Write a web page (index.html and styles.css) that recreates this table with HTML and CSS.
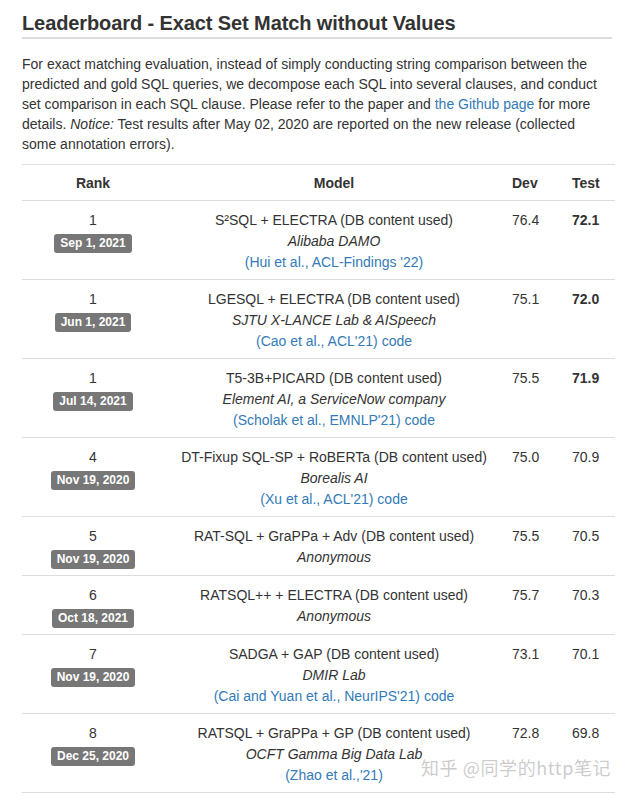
FILE: index.html
```html
<!DOCTYPE html>
<html>
<head>
<meta charset="utf-8">
<link rel="stylesheet" href="styles.css">
</head>
<body>
<div class="page">
  <h2 class="title">Leaderboard - Exact Set Match without Values</h2>
  <p class="intro">For exact matching evaluation, instead of simply conducting string comparison between the predicted and gold SQL queries, we decompose each SQL into several clauses, and conduct set comparison in each SQL clause. Please refer to the paper and <a class="link" href="#">the Github page</a> for more details. <em>Notice:</em> Test results after May 02, 2020 are reported on the new release (collected some annotation errors).</p>
  <table class="board">
    <colgroup>
      <col class="c-rank"><col class="c-model"><col class="c-dev"><col class="c-test">
    </colgroup>
    <thead>
      <tr><th class="rank">Rank</th><th class="model">Model</th><th class="dev">Dev</th><th class="test">Test</th></tr>
    </thead>
    <tbody>
      <tr>
        <td class="rank"><div>1</div><div class="badge-wrap"><span class="badge">Sep 1, 2021</span></div></td>
        <td class="model">S²SQL + ELECTRA (DB content used)<br><i>Alibaba DAMO</i><br><a class="link" href="#">(Hui et al., ACL-Findings '22)</a></td>
        <td class="dev">76.4</td><td class="test"><b>72.1</b></td>
      </tr>
      <tr>
        <td class="rank"><div>1</div><div class="badge-wrap"><span class="badge">Jun 1, 2021</span></div></td>
        <td class="model">LGESQL + ELECTRA (DB content used)<br><i>SJTU X-LANCE Lab &amp; AISpeech</i><br><a class="link" href="#">(Cao et al., ACL'21)</a> <a class="link" href="#">code</a></td>
        <td class="dev">75.1</td><td class="test"><b>72.0</b></td>
      </tr>
      <tr>
        <td class="rank"><div>1</div><div class="badge-wrap"><span class="badge">Jul 14, 2021</span></div></td>
        <td class="model">T5-3B+PICARD (DB content used)<br><i>Element AI, a ServiceNow company</i><br><a class="link" href="#">(Scholak et al., EMNLP'21)</a> <a class="link" href="#">code</a></td>
        <td class="dev">75.5</td><td class="test"><b>71.9</b></td>
      </tr>
      <tr>
        <td class="rank"><div>4</div><div class="badge-wrap"><span class="badge">Nov 19, 2020</span></div></td>
        <td class="model">DT-Fixup SQL-SP + RoBERTa (DB content used)<br><i>Borealis AI</i><br><a class="link" href="#">(Xu et al., ACL'21)</a> <a class="link" href="#">code</a></td>
        <td class="dev">75.0</td><td class="test">70.9</td>
      </tr>
      <tr>
        <td class="rank"><div>5</div><div class="badge-wrap"><span class="badge">Nov 19, 2020</span></div></td>
        <td class="model">RAT-SQL + GraPPa + Adv (DB content used)<br><i>Anonymous</i></td>
        <td class="dev">75.5</td><td class="test">70.5</td>
      </tr>
      <tr>
        <td class="rank"><div>6</div><div class="badge-wrap"><span class="badge">Oct 18, 2021</span></div></td>
        <td class="model">RATSQL++ + ELECTRA (DB content used)<br><i>Anonymous</i></td>
        <td class="dev">75.7</td><td class="test">70.3</td>
      </tr>
      <tr>
        <td class="rank"><div>7</div><div class="badge-wrap"><span class="badge">Nov 19, 2020</span></div></td>
        <td class="model">SADGA + GAP (DB content used)<br><i>DMIR Lab</i><br><a class="link" href="#">(Cai and Yuan et al., NeurIPS'21)</a> <a class="link" href="#">code</a></td>
        <td class="dev">73.1</td><td class="test">70.1</td>
      </tr>
      <tr>
        <td class="rank"><div>8</div><div class="badge-wrap"><span class="badge">Dec 25, 2020</span></div></td>
        <td class="model">RATSQL + GraPPa + GP (DB content used)<br><i>OCFT Gamma Big Data Lab</i><br><a class="link" href="#">(Zhao et al.,'21)</a></td>
        <td class="dev">72.8</td><td class="test">69.8</td>
      </tr>
    </tbody>
  </table>
</div>
<div class="watermark">知乎 @同学的http笔记</div>
</body>
</html>
```

FILE: styles.css
```css
html, body {
  margin: 0;
  padding: 0;
  background: #fff;
}
body {
  font-family: "Liberation Sans", Arial, sans-serif;
  color: #333;
  font-size: 14px;
  overflow: hidden;
}
.page {
  padding: 12px 21px 0 22px;
}
.title {
  margin: 0;
  font-size: 20px;
  line-height: 22px;
  font-weight: bold;
  letter-spacing: -0.1px;
  color: #333;
  padding-bottom: 3px;
  border-bottom: 2px solid #ddd;
}
.intro {
  margin: 15px 0 0;
  line-height: 20px;
  font-size: 14px;
}
.link {
  color: #337ab7;
  text-decoration: none;
}
.board {
  margin-top: 10px;
  width: 593px;
  table-layout: fixed;
  border-collapse: collapse;
}
.c-rank { width: 142px; }
.c-model { width: 340px; }
.c-dev { width: 60px; }
.c-test { width: 51px; }
.board th,
.board td {
  border-top: 1px solid #ddd;
  vertical-align: top;
  padding: 9px 0 6px;
  line-height: 21px;
}
.board th {
  padding: 8px 0 7px;
  line-height: 20px;
  font-weight: bold;
}
.board tbody tr:last-child td {
  border-bottom: 1px solid #ddd;
}
.rank, .model {
  text-align: center;
}
.board .dev,
.board .test {
  text-align: left;
  padding-left: 8px;
}
.badge-wrap {
  padding-top: 3px;
  line-height: 19px;
  height: 19px;
}
.badge {
  display: inline-block;
  background: #777;
  color: #fff;
  font-weight: bold;
  font-size: 12px;
  line-height: 13px;
  padding: 3px 6px;
  border-radius: 3px;
  vertical-align: top;
}
.watermark {
  position: absolute;
  left: 421px;
  top: 754px;
  font-family: "Noto Sans CJK SC", sans-serif;
  font-size: 18px;
  letter-spacing: 0.6px;
  color: rgba(160, 160, 160, 0.55);
  text-shadow: 0 0 1px #fff;
}
```
